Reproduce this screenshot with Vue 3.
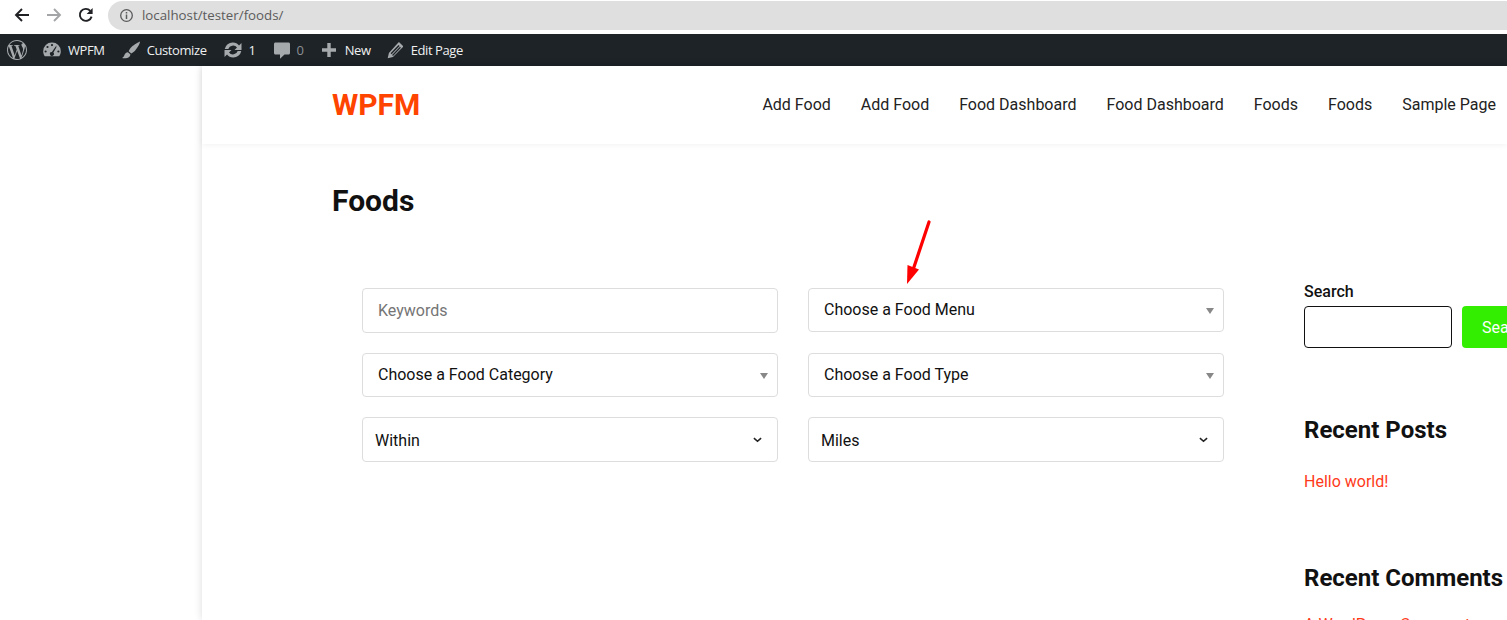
<script setup>
const adminItems = [
  { icon: 'dash', label: 'WPFM' },
  { icon: 'brush', label: 'Customize' },
  { icon: 'sync', label: '1' },
  { icon: 'comment', label: '0', muted: true },
  { icon: 'plus', label: 'New' },
  { icon: 'pencil', label: 'Edit Page' },
]
const navLinks = ['Add Food', 'Add Food', 'Food Dashboard', 'Food Dashboard', 'Foods', 'Foods', 'Sample Page']
</script>

<template>
  <div class="screen">
    <div class="browser-bar">
      <div class="browser-buttons">
        <svg class="nav-icon" viewBox="0 0 16 16"><path d="M15 8H2.5M8 2 2 8l6 6" fill="none" stroke="#202124" stroke-width="1.9" /></svg>
        <svg class="nav-icon" viewBox="0 0 16 16"><path d="M1 8h12.5M8 2l6 6-6 6" fill="none" stroke="#a3a5a7" stroke-width="1.9" /></svg>
        <svg class="nav-icon" viewBox="0 0 16 16"><path d="M13.6 9.6A6 6 0 1 1 12.3 3.8" fill="none" stroke="#202124" stroke-width="1.9" /><path d="M14.6 1v6h-6z" fill="#202124" /></svg>
      </div>
      <div class="address">
        <svg class="info-icon" viewBox="0 0 16 16"><circle cx="8" cy="8" r="6.2" fill="none" stroke="#5a5b5d" stroke-width="1.4" /><path d="M7.2 7h1.6v4.6H7.2zM7.2 4.3h1.6v1.6H7.2z" fill="#5a5b5d" /></svg>
        <span class="url">localhost/tester/foods/</span>
      </div>
    </div>

    <div class="admin-bar">
      <svg class="wp-logo" viewBox="0 0 24 24"><path fill="#a7aaad" d="M21.469 6.825c.84 1.537 1.318 3.3 1.318 5.175 0 3.979-2.156 7.456-5.363 9.325l3.295-9.527c.615-1.54.82-2.771.82-3.864 0-.405-.026-.78-.07-1.11m-7.981.105c.647-.03 1.232-.105 1.232-.105.582-.075.514-.93-.067-.899 0 0-1.755.135-2.88.135-1.064 0-2.85-.15-2.85-.15-.585-.03-.661.855-.075.885 0 0 .54.061 1.125.09l1.68 4.605-2.37 7.08L5.354 6.9c.649-.03 1.234-.1 1.234-.1.585-.075.516-.93-.065-.896 0 0-1.746.138-2.874.138-.2 0-.438-.008-.69-.015C4.911 3.15 8.235 1.215 12 1.215c2.809 0 5.365 1.072 7.286 2.833-.046-.003-.091-.009-.141-.009-1.06 0-1.812.923-1.812 1.914 0 .89.513 1.643 1.06 2.531.411.72.89 1.643.89 2.977 0 .915-.354 1.994-.821 3.479l-1.075 3.585-3.9-11.61.001.014zM12 22.784c-1.059 0-2.081-.153-3.048-.437l3.237-9.406 3.315 9.087c.024.053.05.101.078.149-1.12.393-2.325.609-3.582.609M1.211 12c0-1.564.336-3.05.935-4.39L7.29 21.709C3.694 19.96 1.212 16.271 1.211 12M12 0C5.385 0 0 5.385 0 12s5.385 12 12 12 12-5.385 12-12S18.615 0 12 0" /></svg>
      <div v-for="item in adminItems" :key="item.icon" class="admin-item" :class="'item-' + item.icon">
        <svg class="admin-icon" viewBox="0 0 20 20">
          <path v-if="item.icon === 'dash'" fill="#a7aaad" fill-rule="evenodd" d="M10 2.500a8.600 8.600 0 0 0-8.800 8.700c0 2 .6 3.600 1.600 5.100h14.400c1-1.500 1.600-3.100 1.600-5.100A8.600 8.600 0 0 0 10 2.500zM10 4a1.100 1.100 0 1 1 0 2.200A1.100 1.100 0 0 1 10 4zM5.500 5.900a1.100 1.100 0 1 1 0 2.200 1.100 1.100 0 0 1 0-2.200zM3.600 10.400a1.100 1.100 0 1 1 0 2.200 1.100 1.100 0 0 1 0-2.200zM16.400 10.400a1.100 1.100 0 1 1 0 2.200 1.100 1.100 0 0 1 0-2.200zM14.400 5.400l-.1 2-2.900 5.200a2 2 0 1 1-1.500-.700z" />
          <path v-else-if="item.icon === 'brush'" fill="#a7aaad" d="M19 1.500c-1 .3-6 3-8.500 5.600-1.400 1.400-2.400 3-2.800 4.100l2.500 2.300c1.200-.6 2.700-1.700 4-3.100C16.700 7.800 19.300 2.700 19 1.500zM6.900 12.200c-1.800.2-3.100 1.400-3.600 3-.4 1.300-1 2-2.300 2.900 2.400.6 5.900.2 7.400-1.400.9-1 1.100-1.900.9-2.400z" />
          <g v-else-if="item.icon === 'sync'" fill="#a7aaad">
            <path d="M10 2.500c2.500 0 4.600 1.100 6 2.900L18.500 3v7h-7L14 7.500a5 5 0 0 0-8.700 1.500H1.700A8 8 0 0 1 10 2.500z" />
            <path transform="rotate(180 10 10)" d="M10 2.500c2.500 0 4.600 1.100 6 2.900L18.500 3v7h-7L14 7.500a5 5 0 0 0-8.700 1.500H1.700A8 8 0 0 1 10 2.500z" />
          </g>
          <path v-else-if="item.icon === 'comment'" fill="#a7aaad" d="M3.500 2.500h13c.9 0 1.500.6 1.500 1.500v9c0 .9-.6 1.500-1.500 1.500h-4L8 18.800v-4.300H3.500c-.9 0-1.500-.6-1.500-1.500V4c0-.9.600-1.500 1.500-1.500z" />
          <path v-else-if="item.icon === 'plus'" fill="#a7aaad" d="M8.300 3h3.400v5.300H17v3.400h-5.300V17H8.300v-5.300H3V8.300h5.300z" />
          <path v-else fill="#a7aaad" fill-rule="evenodd" d="M14.200 2.200l3.600 3.600c.5.500.3 1.100-.1 1.500L8 17l-5.300 1.200L3.900 13l9.700-10.700c.2-.2.400-.2.600-.1zM13.500 5 5.600 13.300l1 1 8-8.300zM15 6.800l-7.900 8.300.9.900L15.900 7.700z" />
        </svg>
        <span class="admin-label" :class="{ muted: item.muted }">{{ item.label }}</span>
      </div>
    </div>

    <div class="site">
      <div class="left-gutter"></div>
      <div class="page">
        <header class="site-header">
          <div class="logo">WPFM</div>
          <nav class="menu">
            <a v-for="(link, i) in navLinks" :key="i">{{ link }}</a>
          </nav>
        </header>

        <div class="body-wrap">
          <h1>Foods</h1>
          <div class="columns">
            <div class="filters">
              <input class="field keyword" placeholder="Keywords" />
              <div class="field chosen"><span>Choose a Food Menu</span><i class="caret"></i></div>
              <div class="field chosen"><span>Choose a Food Category</span><i class="caret"></i></div>
              <div class="field chosen"><span>Choose a Food Type</span><i class="caret"></i></div>
              <div class="field plain"><span>Within</span><svg class="chev" viewBox="0 0 10 6"><path d="M1 1l4 3.400L9 1" fill="none" stroke="#222" stroke-width="1.800" /></svg></div>
              <div class="field plain"><span>Miles</span><svg class="chev" viewBox="0 0 10 6"><path d="M1 1l4 3.400L9 1" fill="none" stroke="#222" stroke-width="1.800" /></svg></div>
            </div>

            <aside class="side">
              <label class="search-label">Search</label>
              <div class="search-row">
                <input class="search-input" />
                <button class="search-btn">Search</button>
              </div>
              <h2 class="posts-title">Recent Posts</h2>
              <a class="side-link">Hello world!</a>
              <h2 class="comments-title">Recent Comments</h2>
              <a class="side-link comment-link">A WordPress Commenter</a>
            </aside>
          </div>
        </div>
      </div>
    </div>

    <svg class="arrow" viewBox="0 0 30 70"><path d="M24 2 8 50" stroke="#f00" stroke-width="3.200" stroke-linecap="round" fill="none" /><path d="M2 64 2.500 45 14 49.500z" fill="#f00" /></svg>
  </div>
</template>

<style>
html,
body {
  margin: 0;
  background: #fff;
}
</style>

<style scoped>
.screen {
  position: relative;
  width: 1507px;
  height: 620px;
  overflow: hidden;
  font-family: Roboto, sans-serif;
  color: #111;
  background: #fff;
}

.browser-bar {
  display: flex;
  align-items: center;
  height: 34px;
  box-sizing: border-box;
  padding-bottom: 4px;
  background: #fff;
}
.browser-buttons {
  display: flex;
  gap: 16px;
  width: 108px;
  padding-left: 14px;
  box-sizing: border-box;
}
.nav-icon {
  width: 16px;
  height: 16px;
}
.address {
  flex: 1;
  display: flex;
  align-items: center;
  height: 29px;
  padding-left: 11px;
  border-radius: 15px 0 0 15px;
  background: #dfdfdf;
}
.info-icon {
  width: 15px;
  height: 15px;
  margin-right: 8px;
}
.url {
  font-family: "Open Sans", sans-serif;
  font-size: 13.3px;
  color: #5c5c5c;
}

.admin-bar {
  display: flex;
  align-items: center;
  height: 32px;
  background: #1d2327;
}
.wp-logo {
  width: 20px;
  height: 20px;
  margin: 0 15px 0 7px;
}
.admin-item {
  display: flex;
  align-items: center;
  gap: 6px;
  margin-right: 16px;
}
.item-comment {
  margin-right: 15px;
}
.item-plus {
  margin-right: 14px;
}
.admin-icon {
  width: 20px;
  height: 20px;
}
.admin-label {
  font-family: "Open Sans", sans-serif;
  font-size: 13px;
  letter-spacing: -0.4px;
  color: #f0f0f1;
}
.admin-label.muted {
  margin-left: -1px;
  color: #8c8f94;
}

.site {
  display: flex;
  height: 554px;
}
.left-gutter {
  width: 202px;
  flex-shrink: 0;
}
.page {
  flex: 1;
  min-width: 0;
  box-shadow: 0 0 8px rgba(0, 0, 0, 0.14);
}

.site-header {
  display: flex;
  align-items: center;
  justify-content: space-between;
  box-sizing: border-box;
  height: 78px;
  padding: 0 11px 2px 130px;
  background: #fff;
  box-shadow: 0 1px 6px rgba(0, 0, 0, 0.06);
}
.logo {
  font-size: 30px;
  font-weight: 700;
  color: #ff4400;
}
.menu {
  display: flex;
  gap: 30px;
  font-size: 16px;
  color: #222;
}

.body-wrap {
  padding: 39px 0 0 130px;
}
h1 {
  margin: 0;
  font-size: 30px;
  line-height: 36px;
  font-weight: 700;
  color: #111;
}

.columns {
  display: flex;
  padding: 69px 0 0 30px;
}
.filters {
  display: grid;
  grid-template-columns: 416px 416px;
  grid-auto-rows: min-content;
  column-gap: 30px;
  row-gap: 20px;
  width: 862px;
  flex-shrink: 0;
  align-items: start;
}
.field {
  box-sizing: border-box;
  height: 44px;
  width: 100%;
  border: 1px solid #ddd;
  border-radius: 4px;
  background: #fff;
  font-family: Roboto, sans-serif;
  font-size: 16px;
  color: #111;
  display: flex;
  align-items: center;
  justify-content: space-between;
}
.keyword {
  height: 45px;
  padding: 0 15px;
  outline: none;
}
.keyword::placeholder {
  color: #757575;
  opacity: 1;
}
.chosen {
  padding: 0 9px 0 15px;
}
.chosen span {
  padding-bottom: 2px;
}
.caret {
  width: 0;
  height: 0;
  margin-top: 1px;
  border-left: 4px solid transparent;
  border-right: 4px solid transparent;
  border-top: 6px solid #888;
}
.plain {
  height: 45px;
  padding: 0 15px 0 12px;
}
.plain span {
  padding-top: 2px;
}
.chev {
  width: 9px;
  height: 6px;
}

.side {
  margin-left: 80px;
  flex-shrink: 0;
  width: 260px;
  margin-top: -6px;
}
.search-label {
  display: block;
  font-size: 16px;
  line-height: 19px;
  font-weight: 500;
  color: #111;
}
.search-row {
  display: flex;
  gap: 10px;
  margin-top: 5px;
}
.search-input {
  box-sizing: border-box;
  width: 148px;
  height: 42px;
  border: 1px solid #111;
  border-radius: 4px;
  background: #fff;
  outline: none;
}
.search-btn {
  width: 90px;
  height: 42px;
  border: 0;
  border-radius: 4px;
  background: #33ee00;
  color: #fff;
  font-family: Roboto, sans-serif;
  font-size: 16px;
  font-weight: 400;
  padding: 0 20px;
  text-align: left;
}
h2 {
  margin: 0;
  font-size: 24px;
  line-height: 30px;
  font-weight: 700;
  color: #111;
  white-space: nowrap;
}
.posts-title {
  margin-top: 67px;
}
.side-link {
  display: block;
  margin-top: 27px;
  font-size: 16px;
  line-height: 19px;
  color: #ff3a1a;
}
.comments-title {
  margin-top: 72px;
}
.comment-link {
  margin-top: 22px;
  white-space: nowrap;
}

.arrow {
  position: absolute;
  left: 905px;
  top: 220px;
  width: 30px;
  height: 70px;
}
</style>
